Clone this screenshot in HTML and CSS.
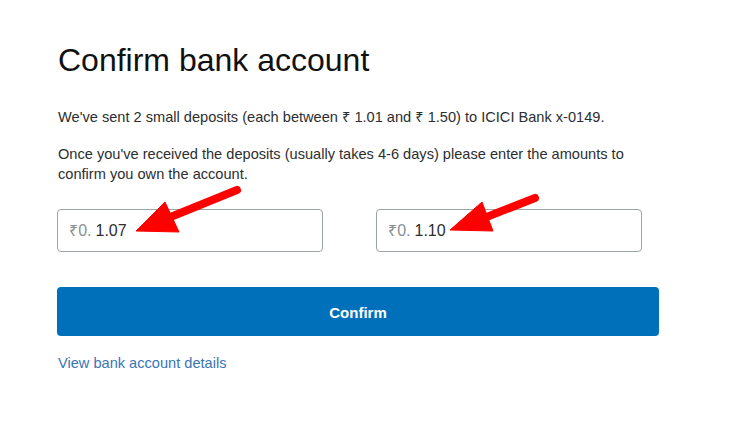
FILE: index.html
```html
<!DOCTYPE html>
<html lang="en">
<head>
    <meta charset="UTF-8">
    <title>Confirm bank account</title>
    <link rel="stylesheet" href="styles.css">
</head>
<body>
<main class="card">
    <h1 class="title">Confirm bank account</h1>
    <p class="note">We've sent 2 small deposits (each between ₹ 1.01 and ₹ 1.50) to ICICI Bank x-0149.</p>
    <p class="note">Once you've received the deposits (usually takes 4-6 days) please enter the amounts to confirm you own the account.</p>

    <div class="amounts">
        <label class="amount"><span class="prefix">₹0.</span><span class="value">1.07</span></label>
        <label class="amount"><span class="prefix">₹0.</span><span class="value">1.10</span></label>
    </div>

    <button type="button" class="confirm">Confirm</button>
    <a class="details" href="#">View bank account details</a>
</main>

<!-- red annotation arrows drawn over the screenshot -->
<svg class="arrows" width="740" height="435" viewBox="0 0 740 435">
    <g fill="#ff0000" stroke="#ff0000">
        <line x1="237" y1="190" x2="168" y2="218" stroke-width="8" stroke-linecap="round"/>
        <polygon points="136,231 165,202 179,232" stroke-width="1" stroke-linejoin="round"/>
        <line x1="535" y1="198" x2="484" y2="218" stroke-width="8" stroke-linecap="round"/>
        <polygon points="450,230 482,202 493,231" stroke-width="1" stroke-linejoin="round"/>
    </g>
</svg>
</body>
</html>
```

FILE: styles.css
```css
body {
    margin: 0;
    background-color: #ffffff;
    font-family: "Liberation Sans", Arial, "Noto Sans", sans-serif;
    color: #2c2e2f;
}

.card {
    width: 602px;
    padding: 41px 0 0 57px;
}

.title {
    margin: 0 0 28px 1px;
    font-size: 32px;
    line-height: 38px;
    font-weight: normal;
    color: #111111;
}

.note {
    margin: 0 0 17px 1px;
    font-size: 14.6px;
    line-height: 20px;
}

.amounts {
    display: grid;
    grid-template-columns: 266px 266px;
    column-gap: 53px;
    margin-top: 25px;
}

.amount {
    display: flex;
    height: 41px;
    line-height: 42px;
    padding: 0 11px;
    border: 1px solid #9da3a6;
    border-radius: 4px;
    font-size: 16px;
    color: #2c2e2f;
}

.amount .prefix {
    color: #8a8f93;
    margin-right: 4px;
}

.confirm {
    display: block;
    width: 602px;
    height: 49px;
    margin-top: 35px;
    border: none;
    border-radius: 4px;
    background-color: #0070ba;
    color: #ffffff;
    font-family: "Liberation Sans", Arial, sans-serif;
    font-size: 15px;
    font-weight: bold;
    padding-top: 2px;
}

.details {
    display: inline-block;
    margin: 17px 0 0 1px;
    font-size: 14.6px;
    line-height: 20px;
    color: #3a76b3;
    text-decoration: none;
}

.arrows {
    position: absolute;
    left: 0;
    top: 0;
    pointer-events: none;
}
```
